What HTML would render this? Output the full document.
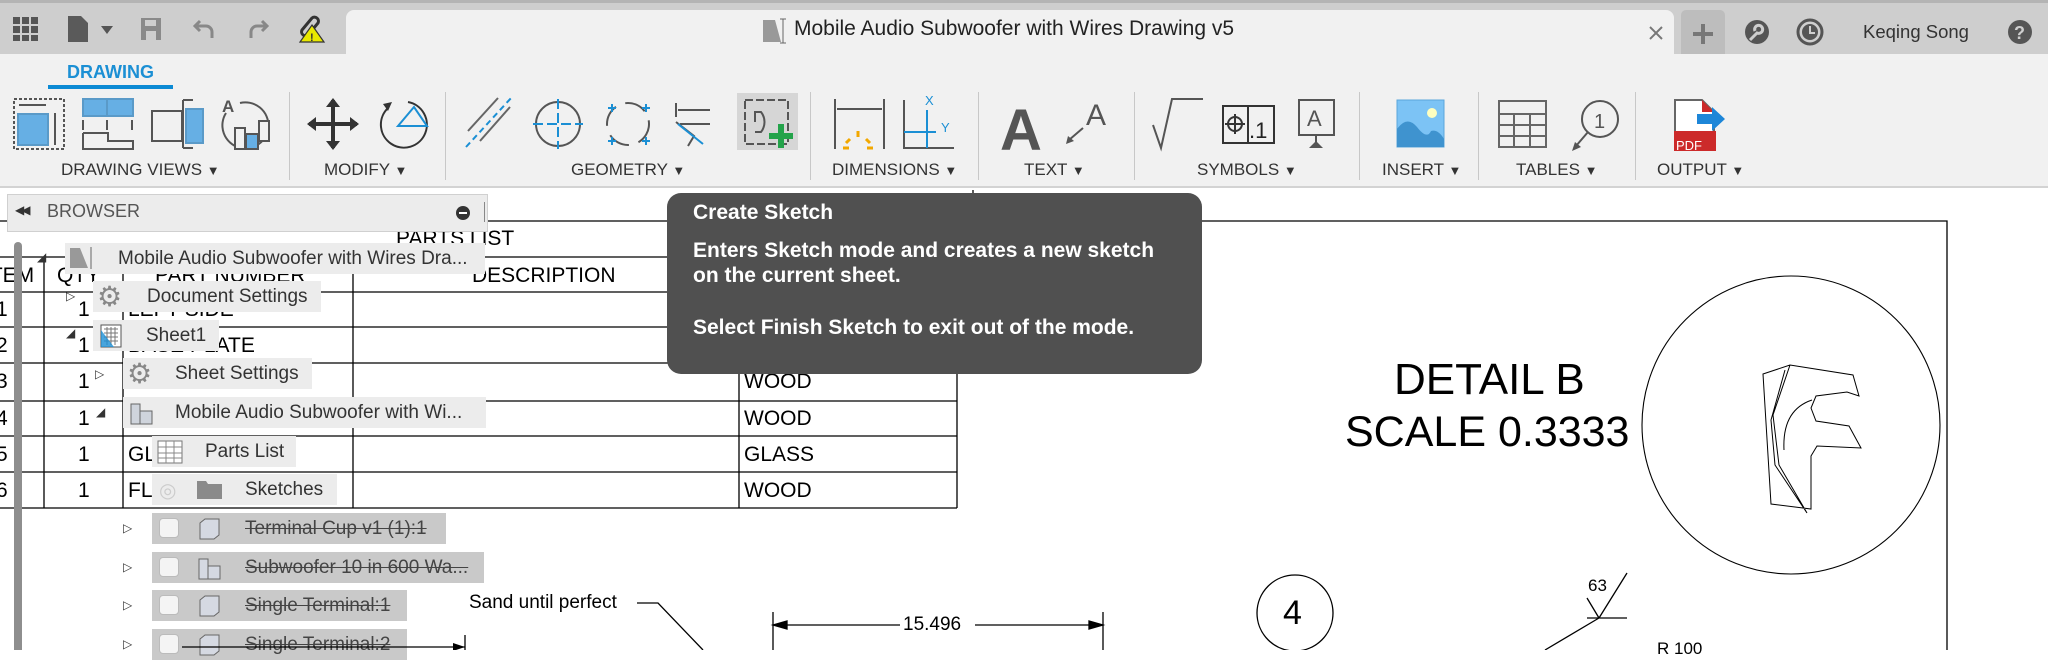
<!DOCTYPE html>
<html><head><meta charset="utf-8">
<style>
*{margin:0;padding:0;box-sizing:border-box}
body{width:2048px;height:650px;overflow:hidden;background:#fff;font-family:"Liberation Sans",sans-serif;position:relative}
.a{position:absolute}
.lbl{position:absolute;top:160px;font-size:17px;color:#333;white-space:nowrap}
.lbl span{font-size:13px}
.sep{position:absolute;top:92px;width:1px;height:88px;background:#c8c8c8}
.t{position:absolute;font-size:21px;color:#000;white-space:nowrap;line-height:1}
.bi{position:absolute;background:#ececec;height:31px}
.bt{position:absolute;font-size:19px;color:#333;white-space:nowrap;line-height:31px}
.dk{background:#c9c9c9}
.st{text-decoration:line-through;color:#444}
.tri{position:absolute;font-size:12px;color:#333}
.cb{position:absolute;width:20px;height:20px;border:1px solid #bbb;border-radius:4px;background:#f4f4f4}
</style></head><body>
<!-- top bar -->
<div class="a" style="left:0;top:0;width:2048px;height:54px;background:#cecece;border-top:3px solid #b4b4b4"></div>
<div class="a" style="left:346px;top:10px;width:1328px;height:44px;background:#f1f1f1;border-radius:8px 8px 0 0"></div>
<div class="a" style="left:1681px;top:10px;width:44px;height:44px;background:#bdbdbd;border-radius:5px 5px 0 0"></div>
<svg class="a" style="left:0;top:0" width="2048" height="54">
 <g fill="#555"><rect x="13" y="17" width="7" height="7"/><rect x="22" y="17" width="7" height="7"/><rect x="31" y="17" width="7" height="7"/><rect x="13" y="26" width="7" height="7"/><rect x="22" y="26" width="7" height="7"/><rect x="31" y="26" width="7" height="7"/><rect x="13" y="35" width="7" height="6"/><rect x="22" y="35" width="7" height="6"/><rect x="31" y="35" width="7" height="6"/></g>
 <path d="M68 16h13l7 7v19H68z" fill="#5a5a5a"/><path d="M101 26h12l-6 8z" fill="#555"/>
 <path d="M141 18h20v22h-20z" fill="#8a8a8a"/><rect x="145" y="20" width="11" height="6" fill="#cecece"/><rect x="146" y="31" width="10" height="9" fill="#cecece"/>
 <path d="M212 38v-6a6 6 0 0 0-6-6h-10m4-5l-5 5 5 5" fill="none" stroke="#888" stroke-width="3"/>
 <path d="M251 38v-6a6 6 0 0 1 6-6h9m-4-5l5 5-5 5" fill="none" stroke="#888" stroke-width="3"/>
 <path d="M302 30l10-12a4 4 0 0 1 6 5l-10 12a4 4 0 0 1-6-5z" fill="none" stroke="#333" stroke-width="3"/>
 <path d="M312 25l12 17h-24z" fill="#e8e800" stroke="#333" stroke-width="1.2"/><text x="310" y="41" font-size="11" font-weight="bold" fill="#333">!</text>
 <path d="M763 20h12l6 22h-18z" fill="#999"/><path d="M783 19v24m-3-24h6m-6 24h6" stroke="#666" stroke-width="1"/>
 <path d="M1650 27l12 12m0-12l-12 12" stroke="#777" stroke-width="2"/>
 <path d="M1703 24v20m-10-10h20" stroke="#777" stroke-width="4"/>
 <circle cx="1757" cy="32" r="12" fill="#555"/><path d="M1750 40l7-7a4 4 0 1 0-2-2" stroke="#cecece" stroke-width="3" fill="none"/>
 <circle cx="1810" cy="32" r="12" fill="none" stroke="#555" stroke-width="3"/><circle cx="1810" cy="32" r="8" fill="#555"/><path d="M1810 26v7h5" stroke="#cecece" stroke-width="2" fill="none"/>
 <circle cx="2020" cy="32" r="12" fill="#555"/><text x="2014" y="39" font-size="18" font-weight="bold" fill="#cecece">?</text>
</svg>
<div class="a" style="left:794px;top:17px;font-size:21px;color:#222">Mobile Audio Subwoofer with Wires Drawing v5</div>
<div class="a" style="left:1863px;top:21px;font-size:18.5px;color:#333">Keqing Song</div>
<!-- toolbar -->
<div class="a" style="left:0;top:54px;width:2048px;height:134px;background:#f1f1f1;border-bottom:2px solid #d3d3d3"></div>
<div class="a" style="left:67px;top:62px;font-size:18px;color:#1b8fd4;font-weight:bold">DRAWING</div>
<div class="a" style="left:48px;top:85px;width:125px;height:4px;background:#0c8ad4"></div>
<div class="a" style="left:737px;top:93px;width:61px;height:57px;background:#d6d6d6"></div>
<svg class="a" style="left:0;top:90px" width="2048" height="64">
 <g transform="translate(0,-90)" fill="none" stroke-width="2">
 <rect x="14" y="99" width="50" height="50" stroke="#555" stroke-dasharray="3 2"/>
 <rect x="18" y="114" width="30" height="31" fill="#66afe4" stroke="#5a9ac8"/>
 <path d="M19 105h27M55 113v32" stroke="#555"/>
 <rect x="83" y="99" width="50" height="17" fill="#66afe4" stroke="#5a9ac8"/><path d="M107 99v17" stroke="#5a9ac8"/>
 <path d="M83 120v10m24-10v10m25-10v10M83 133v16h50v-8h-25v-8H83" stroke="#555"/>
 <rect x="152" y="111" width="30" height="30" stroke="#555"/><rect x="186" y="109" width="17" height="34" fill="#66afe4" stroke="#5a9ac8"/>
 <path d="M183 100h10m0 48h-10m0-48v48" stroke="#555"/>
 <path d="M240 103a23 23 0 1 1-14 10" stroke="#555"/><rect x="235" y="128" width="10" height="21" fill="#f1f1f1" stroke="#555"/><rect x="246" y="134" width="12" height="15" fill="#66afe4" stroke="#555"/><rect x="259" y="121" width="10" height="20" fill="#f1f1f1" stroke="#555"/>
 <path d="M333 100v48M309 124h48" stroke="#333" stroke-width="4"/>
 <path d="M333 98l-7 9h14zM333 150l-7-9h14zM307 124l9-7v14zM359 124l-9-7v14z" fill="#333" stroke="none"/>
 <path d="M388 108a23 23 0 1 0 20-6" stroke="#333"/><path d="M383 104l9 -2-4 9z" fill="#333" stroke="none"/>
 <path d="M398 126l16-19 13 19z" stroke="#1b8fd4"/>
 <path d="M468 131l30-33M480 141l30-34" stroke="#666"/><path d="M466 147l46-50" stroke="#1b8fd4" stroke-dasharray="6 4"/>
 <circle cx="558" cy="124" r="22" stroke="#555"/><path d="M533 124h50M558 99v50" stroke="#1b8fd4" stroke-dasharray="10 4"/>
 <circle cx="628" cy="124" r="21" stroke="#555" stroke-dasharray="22 10"/><path d="M612 104v8m-4-4h8M646 104v8m-4-4h8M612 137v8m-4-4h8M646 137v8m-4-4h8" stroke="#1b8fd4"/>
 <path d="M676 103v14m2-7h32m-30 14h30M676 122l18 14-6 10" stroke="#555"/><path d="M678 124l25 20" stroke="#1b8fd4"/>
 <rect x="745" y="100" width="43" height="44" stroke="#555" stroke-dasharray="8 3"/><path d="M755 122v-10h6a16 16 0 0 1 0 20h-6" stroke="#555"/>
 <path d="M781 124v24M769 136h24" stroke="#23a34a" stroke-width="6"/>
 <path d="M835 99v50M884 99v50M837 109h45" stroke="#555"/><path d="M846 143l4 -4M858 137v-6M870 143l-4-4M843 148h6m18 0h6" stroke="#f2a800" stroke-width="3"/>
 <path d="M904 100v48h50" stroke="#555"/><path d="M904 132h32M927 110v38" stroke="#1b8fd4"/>
 <path d="M1153 125l8 23 11-49h31" stroke="#555"/>
 <rect x="1223" y="106" width="51" height="37" stroke="#333"/><path d="M1248 106v37" stroke="#333"/><circle cx="1235" cy="124" r="7" stroke="#333"/><path d="M1225 124h20M1235 114v20" stroke="#333"/>
 <rect x="1299" y="100" width="35" height="35" stroke="#555"/><path d="M1316 135v8" stroke="#555"/><path d="M1309 148l7-7 7 7z" fill="#555" stroke="none"/>
 <rect x="1397" y="100" width="47" height="47" fill="#7cc3f5" stroke="#5aa6dc" stroke-width="1"/><path d="M1397 147v-18q10-14 20-2 10 13 14 4 7-2 13 8v8z" fill="#3f93cf" stroke="none"/><circle cx="1432" cy="113" r="5" fill="#ffffc0" stroke="none"/>
 <rect x="1499" y="101" width="47" height="46" stroke="#666"/><path d="M1499 114h47M1499 125h47M1499 136h47M1514 114v33M1530 114v33" stroke="#666"/>
 <circle cx="1600" cy="119" r="18" stroke="#555"/><path d="M1588 132l-12 14" stroke="#555"/><path d="M1572 151l3-9 6 5z" fill="#555" stroke="none"/>
 <path d="M1675 146V100h27l12 12v22" stroke="#666" fill="#fff"/><path d="M1702 100v12h12z" fill="#cc2a2a" stroke="none"/><rect x="1674" y="131" width="42" height="20" fill="#cc2a2a" stroke="none"/>
 <path d="M1697 114h15v-7l13 12-13 12v-7h-15z" fill="#1d86d8" stroke="none"/>
 </g>
 <text x="222" y="22" font-size="17" font-family="Liberation Sans" fill="#555" font-weight="bold">A</text>
 <text x="1000" y="60" font-size="58" font-family="Liberation Sans" fill="#555" font-weight="bold">A</text>
 <text x="1086" y="35" font-size="30" font-family="Liberation Sans" fill="#555">A</text>
 <path d="M1083 38l-14 12" stroke="#555" stroke-width="2"/><path d="M1066 54l2-8 6 5z" fill="#555"/>
 <text x="1249" y="48" font-size="22" font-family="Liberation Sans" fill="#222">.1</text>
 <text x="1307" y="36" font-size="22" font-family="Liberation Sans" fill="#555">A</text>
 <text x="925" y="15" font-size="13" font-family="Liberation Sans" fill="#1b8fd4">X</text>
 <text x="941" y="42" font-size="13" font-family="Liberation Sans" fill="#1b8fd4">Y</text>
 <text x="1594" y="38" font-size="20" font-family="Liberation Sans" fill="#555">1</text>
 <text x="1676" y="60" font-size="13" font-family="Liberation Sans" fill="#fff">PDF</text>
</svg>
<div class="sep" style="left:289px"></div><div class="sep" style="left:445px"></div><div class="sep" style="left:810px"></div><div class="sep" style="left:978px"></div><div class="sep" style="left:1134px"></div><div class="sep" style="left:1359px"></div><div class="sep" style="left:1478px"></div><div class="sep" style="left:1635px"></div>
<div class="lbl" style="left:61px">DRAWING VIEWS <span>▼</span></div>
<div class="lbl" style="left:324px">MODIFY <span>▼</span></div>
<div class="lbl" style="left:571px">GEOMETRY <span>▼</span></div>
<div class="lbl" style="left:832px">DIMENSIONS <span>▼</span></div>
<div class="lbl" style="left:1024px">TEXT <span>▼</span></div>
<div class="lbl" style="left:1197px">SYMBOLS <span>▼</span></div>
<div class="lbl" style="left:1382px">INSERT <span>▼</span></div>
<div class="lbl" style="left:1516px">TABLES <span>▼</span></div>
<div class="lbl" style="left:1657px">OUTPUT <span>▼</span></div>
<!-- drawing -->
<svg class="a" style="left:0;top:0" width="2048" height="650" fill="none" stroke="#000" stroke-width="1.3">
 <path d="M973 190v30M0 221h1947v429"/>
 <path d="M0 257h957M0 292h957M0 327h957M0 363h957M0 401h957M0 436h957M0 472h957M0 508h957"/>
 <path d="M44 257v251M123 257v251M353 257v251M739 257v251M957 221v287"/>
 <circle cx="1791" cy="425" r="149" stroke-width="1.1"/>
 <path d="M1763 374l27-9 63 10 6 21-12-4-31 4-5 12 5 13 33 5 12 22-44-2-6 10v53l-40-5z M1790 365l-17 50 6 50 28 48 M1785 370l-14 50 4 45 32 48 M1812 400q-30 10-28 50" stroke-width="1"/>
 <circle cx="1295" cy="613" r="38"/>
 <path d="M1627 573l-28 45M1587 598l12 20M1587 618h40M1599 618l-54 32"/>
 <path d="M773 612v38M1103 612v38M780 625h120M975 625h120"/>
 <path d="M773 625l14-4v8zM1103 625l-14-4v8z" fill="#000"/>
 <path d="M637 603h21l45 47"/>
</svg>
<div class="t" style="left:1394px;top:358px;font-size:44px">DETAIL B</div>
<div class="t" style="left:1345px;top:411px;font-size:43px">SCALE 0.3333</div>
<div class="t" style="left:1283px;top:596px;font-size:34px">4</div>
<div class="t" style="left:1588px;top:577px;font-size:17px">63</div>
<div class="t" style="left:1657px;top:640px;font-size:17px">R 100</div>
<div class="t" style="left:903px;top:615px;font-size:19px">15.496</div>
<div class="t" style="left:469px;top:593px;font-size:19px">Sand until perfect</div>
<div class="t" style="left:286px;top:638px;font-size:17px">13.000</div>
<div class="t" style="left:396px;top:228px">PARTS LIST</div>
<div class="t" style="left:-16px;top:265px">ITEM</div><div class="t" style="left:57px;top:265px">QTY</div><div class="t" style="left:155px;top:265px">PART NUMBER</div><div class="t" style="left:472px;top:265px">DESCRIPTION</div>
<div class="t" style="left:-4px;top:299px">1</div><div class="t" style="left:-4px;top:335px">2</div><div class="t" style="left:-4px;top:371px">3</div><div class="t" style="left:-4px;top:408px">4</div><div class="t" style="left:-4px;top:444px">5</div><div class="t" style="left:-4px;top:480px">6</div>
<div class="t" style="left:78px;top:299px">1</div><div class="t" style="left:78px;top:335px">1</div><div class="t" style="left:78px;top:371px">1</div><div class="t" style="left:78px;top:408px">1</div><div class="t" style="left:78px;top:444px">1</div><div class="t" style="left:78px;top:480px">1</div>
<div class="t" style="left:128px;top:299px">LEFT SIDE</div><div class="t" style="left:128px;top:335px">BASE PLATE</div><div class="t" style="left:128px;top:444px">GLASS FRAME</div><div class="t" style="left:128px;top:480px">FLOOR</div>
<div class="t" style="left:744px;top:371px">WOOD</div><div class="t" style="left:744px;top:408px">WOOD</div><div class="t" style="left:744px;top:444px">GLASS</div><div class="t" style="left:744px;top:480px">WOOD</div>
<!-- browser -->
<div class="a" style="left:7px;top:194px;width:481px;height:38px;background:#ececec;border:1px solid #d0d0d0"></div>
<div class="a" style="left:15px;top:203px;font-size:12px;color:#333;letter-spacing:-3px">◀◀</div>
<div class="a" style="left:47px;top:201px;font-size:18px;color:#555">BROWSER</div>
<div class="a" style="left:456px;top:206px;width:14px;height:14px;border-radius:50%;background:#333"></div><div class="a" style="left:459px;top:212px;width:8px;height:2px;background:#fff"></div>
<div class="a" style="left:484px;top:202px;width:1px;height:20px;background:#888"></div>
<div class="a" style="left:14px;top:242px;width:8px;height:408px;background:#8e8e8e;border-radius:4px 4px 0 0"></div>
<div class="tri" style="left:37px;top:250px">◢</div>
<div class="bi" style="left:65px;top:243px;width:420px"></div>
<svg class="a" style="left:69px;top:246px" width="26" height="24"><path d="M1 2h10l8 20H1z" fill="#999"/><path d="M22 1v22" stroke="#666"/></svg>
<div class="bt" style="left:118px;top:243px">Mobile Audio Subwoofer with Wires Dra...</div>
<div class="tri" style="left:66px;top:289px">▷</div>
<div class="bi" style="left:93px;top:281px;width:228px"></div>
<div class="a" style="left:97px;top:280px;font-size:28px;color:#888">⚙</div>
<div class="bt" style="left:147px;top:281px">Document Settings</div>
<div class="tri" style="left:66px;top:326px">◢</div>
<div class="bi" style="left:93px;top:320px;width:126px"></div>
<svg class="a" style="left:100px;top:324px" width="22" height="24"><rect x="1" y="1" width="20" height="22" fill="#fff" stroke="#555"/><path d="M4 5h14M4 9h14M4 13h14M4 17h14M7 3v18M11 3v18M15 3v18" stroke="#777" stroke-width="1"/><path d="M1 6l13 17H1z" fill="#1b8fd4" opacity=".8"/></svg>
<div class="bt" style="left:146px;top:320px">Sheet1</div>
<div class="tri" style="left:95px;top:367px">▷</div>
<div class="bi" style="left:123px;top:358px;width:189px"></div>
<div class="a" style="left:127px;top:357px;font-size:28px;color:#888">⚙</div>
<div class="bt" style="left:175px;top:358px">Sheet Settings</div>
<div class="tri" style="left:96px;top:405px">◢</div>
<div class="bi" style="left:123px;top:397px;width:363px"></div>
<svg class="a" style="left:130px;top:401px" width="24" height="24"><path d="M1 3h9v20H1zM10 10h12v13H10z" fill="#cfd4dc" stroke="#666"/></svg>
<div class="bt" style="left:175px;top:397px">Mobile Audio Subwoofer with Wi...</div>
<div class="bi" style="left:152px;top:436px;width:144px"></div>
<svg class="a" style="left:157px;top:440px" width="26" height="24"><rect x="1" y="1" width="24" height="22" fill="#fff" stroke="#777"/><path d="M1 7h24M1 13h24M1 18h24M9 1v22M17 1v22" stroke="#888"/></svg>
<div class="bt" style="left:205px;top:436px">Parts List</div>
<div class="bi" style="left:152px;top:474px;width:185px"></div>
<div class="a" style="left:159px;top:478px;font-size:20px;color:#ccc">◎</div>
<svg class="a" style="left:196px;top:478px" width="27" height="22"><path d="M1 3h9l2 3h14v15H1z" fill="#8a8a8a"/></svg>
<div class="bt" style="left:245px;top:474px">Sketches</div>
<div class="tri" style="left:123px;top:521px">▷</div><div class="bi dk" style="left:152px;top:513px;width:294px"></div><div class="cb" style="left:159px;top:518px"></div>
<svg class="a" style="left:198px;top:517px" width="24" height="24"><path d="M2 6l5-4h14v16l-5 4H2z" fill="#d5d9e2" stroke="#666"/></svg>
<div class="bt st" style="left:245px;top:513px">Terminal Cup v1 (1):1</div>
<div class="tri" style="left:123px;top:560px">▷</div><div class="bi dk" style="left:152px;top:552px;width:332px"></div><div class="cb" style="left:159px;top:557px"></div>
<svg class="a" style="left:198px;top:556px" width="26" height="24"><path d="M1 3h9v20H1zM10 10h12v13H10z" fill="#d5d9e2" stroke="#666"/></svg>
<div class="bt st" style="left:245px;top:552px">Subwoofer 10 in 600 Wa...</div>
<div class="tri" style="left:123px;top:598px">▷</div><div class="bi dk" style="left:152px;top:590px;width:255px"></div><div class="cb" style="left:159px;top:595px"></div>
<svg class="a" style="left:198px;top:594px" width="24" height="24"><path d="M2 6l5-4h14v16l-5 4H2z" fill="#d5d9e2" stroke="#666"/></svg>
<div class="bt st" style="left:245px;top:590px">Single Terminal:1</div>
<div class="tri" style="left:123px;top:637px">▷</div><div class="bi dk" style="left:152px;top:629px;width:255px"></div><div class="cb" style="left:159px;top:634px"></div>
<svg class="a" style="left:198px;top:633px" width="24" height="24"><path d="M2 6l5-4h14v16l-5 4H2z" fill="#d5d9e2" stroke="#666"/></svg>
<div class="bt st" style="left:245px;top:629px">Single Terminal:2</div>
<svg class="a" style="left:0;top:0" width="500" height="650"><path d="M182 647h283M465 635v15" stroke="#000" stroke-width="1.3"/><path d="M465 647l-12-4v8z" fill="#000"/></svg>
<!-- tooltip -->
<div class="a" style="left:667px;top:193px;width:535px;height:181px;background:#505050;border-radius:14px;color:#fff;font-weight:bold;font-size:21px;padding:7px 0 0 26px;line-height:25px;white-space:nowrap">
<div>Create Sketch</div>
<div style="margin-top:13px">Enters Sketch mode and creates a new sketch<br>on the current sheet.</div>
<div style="margin-top:27px">Select Finish Sketch to exit out of the mode.</div>
</div>
</body></html>
